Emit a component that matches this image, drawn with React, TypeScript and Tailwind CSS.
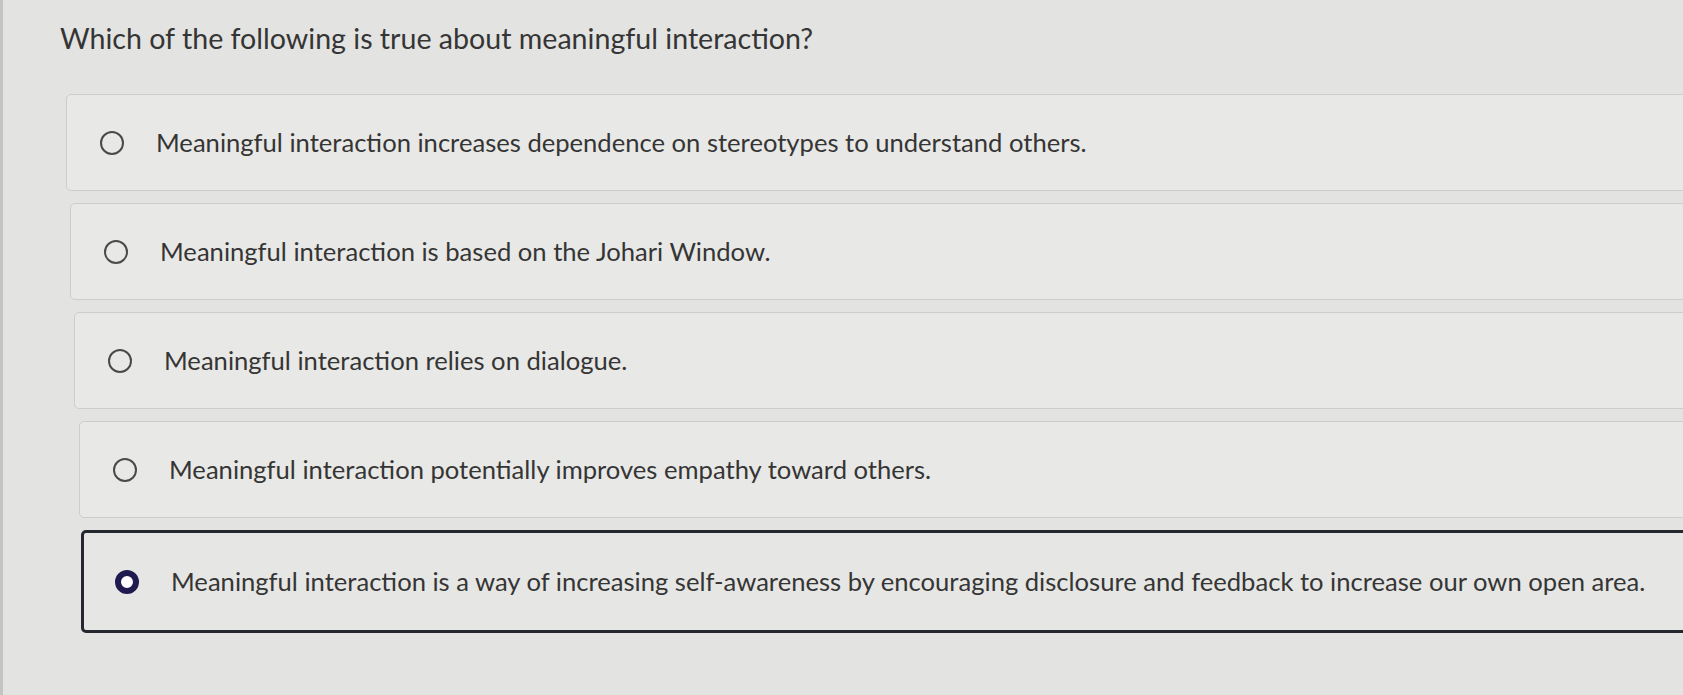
import { useState } from 'react';

const options = [
  'Meaningful interaction increases dependence on stereotypes to understand others.',
  'Meaningful interaction is based on the Johari Window.',
  'Meaningful interaction relies on dialogue.',
  'Meaningful interaction potentially improves empathy toward others.',
  'Meaningful interaction is a way of increasing self-awareness by encouraging disclosure and feedback to increase our own open area.',
];

// photo is slightly skewed, each row starts a bit further right
const offsets = ['ml-[63px]', 'ml-[67px]', 'ml-[71px]', 'ml-[76px]', 'ml-[78px]'];

export default function App() {
  const [selected, setSelected] = useState(4);

  return (
    <div
      className="w-[1683px] h-[695px] overflow-hidden bg-[#e3e3e1] border-l-[3px] border-[#c4c4c2] text-[#353535]"
      style={{ fontFamily: 'Lato, "Liberation Sans", sans-serif' }}
    >
      <h1 className="pl-[57px] pt-[18px] text-[28.6px] leading-[40px] font-normal">
        Which of the following is true about meaningful interaction?
      </h1>

      <div className="mt-[36px] flex flex-col gap-[12px]">
        {options.map((text, i) => {
          const active = i === selected;
          return (
            <button
              key={i}
              onClick={() => setSelected(i)}
              className={
                'flex items-center text-left -mr-10 rounded-[5px] ' +
                offsets[i] +
                (active
                  ? ' h-[103px] pl-[31px] border-[3px] border-[#262830] bg-[#e6e6e4]'
                  : ' h-[97px] pl-[33px] border border-[#cdcdcb] bg-[#e8e8e6]')
              }
            >
              {active ? (
                <span className="w-[24px] h-[24px] shrink-0 rounded-full border-[6px] border-[#1f1b4e] bg-white" />
              ) : (
                <span className="w-[24px] h-[24px] shrink-0 rounded-full border-2 border-[#4a4a4a]" />
              )}
              <span className="ml-[32px] text-[25.6px] leading-none whitespace-nowrap">{text}</span>
            </button>
          );
        })}
      </div>
    </div>
  );
}
